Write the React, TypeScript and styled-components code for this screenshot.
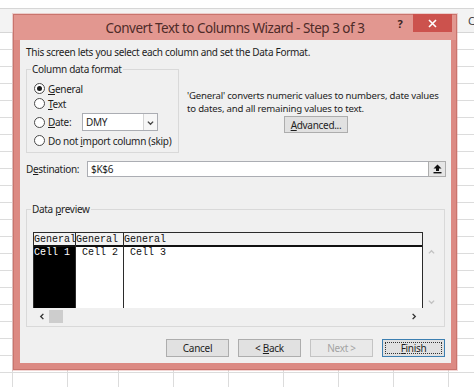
import React from 'react';
import styled, { createGlobalStyle, css } from 'styled-components';

const Global = createGlobalStyle`
  html, body { margin: 0; padding: 0; background: #ffffff; overflow: hidden; }
  body { font-family: "Noto Sans", "DejaVu Sans", sans-serif; color: #1e1e1e; }
  * { box-sizing: border-box; }
`;

const UI_FONT = `"Noto Sans", "DejaVu Sans", sans-serif`;
const MONO = `"Liberation Mono", "DejaVu Sans Mono", monospace`;

/* ---------- spreadsheet backdrop ---------- */
const Page = styled.div`
  position: relative;
  width: 474px;
  height: 387px;
  overflow: hidden;
  background: #ffffff;
  display: flex;
  flex-direction: column;
`;

const TopStrip = styled.div`
  height: 9px;
  background: #ffffff;
  border-bottom: 1px solid #d6d6d6;
`;

const HeaderBand = styled.div`
  height: 24px;
  background: #f3f3f3;
  border-bottom: 1px solid #d6d6d6;
  display: flex;
  align-items: center;
  justify-content: flex-end;
  font-family: ${UI_FONT};
  font-size: 11px;
  color: #444;
`;

const HeaderLetter = styled.span`
  width: 6px;
  overflow: hidden;
  white-space: nowrap;
`;

const SheetGrid = styled.div`
  flex: 1;
  display: flex;
  background-image: repeating-linear-gradient(
    to bottom,
    transparent 0px,
    transparent 16px,
    #dcdcdc 16px,
    #dcdcdc 17px
  );
`;

const SheetCol = styled.div<{ $w: number }>`
  width: ${(p) => p.$w}px;
  flex: none;
  border-right: 1px solid #dcdcdc;
`;

/* ---------- dialog window ---------- */
const Dialog = styled.div`
  position: absolute;
  left: 13px;
  top: 14px;
  width: 444px;
  height: 356px;
  background: #dc8a83;
  border: 1px solid #c9746d;
  display: flex;
  flex-direction: column;
  box-shadow: 0 0 0 1px rgba(220, 138, 131, 0.35);
`;

const TitleBar = styled.div`
  position: relative;
  height: 25px;
  flex: none;
  display: flex;
  align-items: center;
  justify-content: center;
  background: #e29790;
`;

const TitleText = styled.div`
  font-family: ${UI_FONT};
  font-size: 13.5px;
  letter-spacing: -0.5px;
  color: #4e2b28;
  padding-top: 1px;
  white-space: nowrap;
`;

const TitleControls = styled.div`
  position: absolute;
  right: 4px;
  top: -1px;
  display: flex;
  align-items: flex-start;
`;

const HelpGlyph = styled.div`
  width: 26px;
  height: 18px;
  display: flex;
  align-items: center;
  justify-content: center;
  font-family: ${UI_FONT};
  font-weight: 700;
  font-size: 11px;
  color: #3a2422;
`;

const CloseButton = styled.div`
  width: 39px;
  height: 18px;
  background: #cc524d;
  display: flex;
  align-items: center;
  justify-content: center;
`;

const Body = styled.div`
  flex: 1;
  margin: 0 5px 6px 6px;
  background: #f0f0f0;
  display: flex;
  flex-direction: column;
  font-family: ${UI_FONT};
  font-size: 10px;
  letter-spacing: -0.3px;
  color: #1e1e1e;
`;

const Intro = styled.div`
  padding: 5px 6px 0 6px;
  line-height: 14px;
  white-space: nowrap;
`;

const Content = styled.div`
  display: flex;
  flex-direction: column;
  padding: 0 6px;
`;

const TopRow = styled.div`
  display: flex;
  margin-top: 10px;
`;

const GroupBox = styled.div<{ $w?: number; $h: number }>`
  ${(p) =>
    p.$w
      ? css`
          width: ${p.$w}px;
        `
      : css`
          width: 100%;
        `}
  height: ${(p) => p.$h}px;
  border: 1px solid #d9d9d9;
  display: flex;
  flex-direction: column;
  flex: none;
`;

const Legend = styled.div`
  margin: -8px 0 0 4px;
  padding: 0 1px;
  align-self: flex-start;
  background: #f0f0f0;
  line-height: 14px;
  white-space: nowrap;
`;

const RadioList = styled.div`
  display: flex;
  flex-direction: column;
  padding: 5px 0 0 7px;
`;

const RadioRow = styled.div<{ $h?: number }>`
  height: ${(p) => p.$h ?? 15}px;
  display: flex;
  align-items: center;
  white-space: nowrap;
`;

const RadioCircle = styled.span<{ $on?: boolean }>`
  width: 11px;
  height: 11px;
  border-radius: 50%;
  border: 1px solid #4a4a4a;
  background: #ffffff;
  display: inline-flex;
  align-items: center;
  justify-content: center;
  margin-right: 3px;
  flex: none;
  &::after {
    content: '';
    width: 5px;
    height: 5px;
    border-radius: 50%;
    background: ${(p) => (p.$on ? '#1a1a1a' : 'transparent')};
  }
`;

const DateLabel = styled.span`
  width: 34px;
  flex: none;
`;

const Dropdown = styled.div`
  width: 76px;
  height: 18px;
  border: 1px solid #abadb3;
  background: #ffffff;
  display: flex;
  align-items: stretch;
`;

const DropdownValue = styled.span`
  flex: 1;
  padding-left: 3px;
  display: flex;
  align-items: center;
`;

const DropdownArrow = styled.span`
  width: 14px;
  border-left: 1px solid #d4d4d4;
  display: flex;
  align-items: center;
  justify-content: center;
  background: #f7f7f7;
`;

const Description = styled.div`
  margin: 20px 0 0 8px;
  display: flex;
  flex-direction: column;
  align-items: center;
  flex: 1;
`;

const DescLine = styled.div`
  align-self: stretch;
  font-size: 9.6px;
  letter-spacing: -0.2px;
  line-height: 13px;
  white-space: nowrap;
`;

const Button = styled.div<{ $w?: number; $disabled?: boolean; $default?: boolean }>`
  width: ${(p) => p.$w ?? 63}px;
  height: 18px;
  flex: none;
  display: flex;
  align-items: center;
  justify-content: center;
  background: ${(p) => (p.$disabled ? '#e9e9e9' : '#e1e1e1')};
  border: 1px solid ${(p) => (p.$default ? '#3c7fb1' : p.$disabled ? '#c4c4c4' : '#adadad')};
  color: ${(p) => (p.$disabled ? '#a3a3a3' : '#1e1e1e')};
  position: relative;
  ${(p) =>
    p.$default &&
    css`
      &::after {
        content: '';
        position: absolute;
        inset: 2px;
        border: 1px dotted #333;
      }
    `}
`;

const AdvancedButton = styled(Button)`
  margin-top: 1px;
  height: 17px;
`;

const DestRow = styled.div`
  margin-top: 8px;
  height: 16px;
  display: flex;
  align-items: center;
`;

const DestLabel = styled.span`
  width: 61px;
  flex: none;
`;

const DestInput = styled.div`
  flex: 1;
  margin-right: -1px;
  height: 16px;
  border: 1px solid #abadb3;
  background: #ffffff;
  display: flex;
  align-items: stretch;
`;

const DestValue = styled.span`
  flex: 1;
  padding-left: 3px;
  display: flex;
  align-items: center;
`;

const CollapseButton = styled.span`
  width: 18px;
  border: 1px solid #adadad;
  margin: -1px -1px -1px 0;
  background: #e6e6e6;
  display: flex;
  align-items: center;
  justify-content: center;
`;

const PreviewGroup = styled(GroupBox)`
  margin-top: 32px;
`;

const PreviewArea = styled.div`
  margin: 16px 0 0 6px;
  display: grid;
  grid-template-columns: 390px 17px;
  grid-template-rows: 76px 17px;
`;

const Table = styled.div`
  display: flex;
  border-left: 1px solid #2b2b2b;
  border-top: 1px solid #2b2b2b;
  border-right: 1px solid #2b2b2b;
  background: #ffffff;
  font-family: ${MONO};
  font-size: 10px;
  letter-spacing: 0;
`;

const Column = styled.div<{ $w?: number; $first?: boolean }>`
  ${(p) =>
    p.$w
      ? css`
          width: ${p.$w}px;
          flex: none;
        `
      : css`
          flex: 1;
        `}
  border-left: ${(p) => (p.$first ? 'none' : '1px solid #2b2b2b')};
  display: flex;
  flex-direction: column;
`;

const HeadCell = styled.div`
  height: 14px;
  background: #f2f2f2;
  border-bottom: 2px solid #111;
  line-height: 13px;
  white-space: pre;
  overflow: hidden;
  color: #111;
`;

const DataCell = styled.div<{ $selected?: boolean }>`
  flex: 1;
  background: ${(p) => (p.$selected ? '#000000' : '#ffffff')};
  color: ${(p) => (p.$selected ? '#ffffff' : '#111111')};
  line-height: 12px;
  white-space: pre;
  overflow: hidden;
`;

const VScroll = styled.div`
  padding-top: 13px;
  display: flex;
  flex-direction: column;
  justify-content: space-between;
  align-items: center;
  background: #f0f0f0;
`;

const ScrollArrow = styled.span`
  height: 14px;
  display: flex;
  align-items: center;
  justify-content: center;
  width: 14px;
`;

const HScroll = styled.div`
  display: flex;
  align-items: center;
  background: #f0f0f0;
  padding: 0 3px 0 2px;
`;

const Thumb = styled.span`
  width: 14px;
  height: 13px;
  background: #cdcdcd;
`;

const Spacer = styled.span`
  flex: 1;
`;

const ButtonRow = styled.div`
  margin-top: 12px;
  display: flex;
  justify-content: flex-end;
  gap: 9px;
`;

/* ---------- icons ---------- */
const Chevron = ({ dir, color, size = 7 }: { dir: 'up' | 'down' | 'left' | 'right'; color: string; size?: number }) => {
  const paths: Record<string, string> = {
    up: 'M1 5 L4 2 L7 5',
    down: 'M1 3 L4 6 L7 3',
    left: 'M5 1 L2 4 L5 7',
    right: 'M3 1 L6 4 L3 7',
  };
  return (
    <svg width={size} height={size} viewBox="0 0 8 8">
      <path d={paths[dir]} fill="none" stroke={color} strokeWidth="1.6" />
    </svg>
  );
};

const CloseIcon = () => (
  <svg width="9" height="9" viewBox="0 0 9 9">
    <path d="M1 1 L8 8 M8 1 L1 8" stroke="#ffffff" strokeWidth="1.6" />
  </svg>
);

const CollapseIcon = () => (
  <svg width="9" height="10" viewBox="0 0 9 10">
    <path d="M4.5 0.5 L8.5 4.5 L6 4.5 L6 7 L3 7 L3 4.5 L0.5 4.5 Z" fill="#111" />
    <rect x="0.5" y="8" width="8" height="1.4" fill="#111" />
  </svg>
);

export default function App() {
  const sheetCols = [13, 55, 51, 55, 55, 55, 55, 55, 55, 55];
  return (
    <>
      <Global />
      <Page>
        <TopStrip />
        <HeaderBand>
          <HeaderLetter>C</HeaderLetter>
        </HeaderBand>
        <SheetGrid>
          {sheetCols.map((w, i) => (
            <SheetCol key={i} $w={w} />
          ))}
        </SheetGrid>

        <Dialog>
          <TitleBar>
            <TitleText>Convert Text to Columns Wizard - Step 3 of 3</TitleText>
            <TitleControls>
              <HelpGlyph>?</HelpGlyph>
              <CloseButton>
                <CloseIcon />
              </CloseButton>
            </TitleControls>
          </TitleBar>
          <Body>
            <Intro>This screen lets you select each column and set the Data Format.</Intro>
            <Content>
              <TopRow>
                <GroupBox $w={153} $h={84}>
                  <Legend>Column data format</Legend>
                  <RadioList>
                    <RadioRow>
                      <RadioCircle $on />
                      <span>
                        <u>G</u>eneral
                      </span>
                    </RadioRow>
                    <RadioRow>
                      <RadioCircle />
                      <span>
                        <u>T</u>ext
                      </span>
                    </RadioRow>
                    <RadioRow $h={22}>
                      <RadioCircle />
                      <DateLabel>
                        <u>D</u>ate:
                      </DateLabel>
                      <Dropdown>
                        <DropdownValue>DMY</DropdownValue>
                        <DropdownArrow>
                          <Chevron dir="down" color="#444" />
                        </DropdownArrow>
                      </Dropdown>
                    </RadioRow>
                    <RadioRow>
                      <RadioCircle />
                      <span>
                        Do not <u>i</u>mport column (skip)
                      </span>
                    </RadioRow>
                  </RadioList>
                </GroupBox>
                <Description>
                  <DescLine>'General' converts numeric values to numbers, date values</DescLine>
                  <DescLine>to dates, and all remaining values to text.</DescLine>
                  <AdvancedButton $w={64}>
                    <span>
                      <u>A</u>dvanced...
                    </span>
                  </AdvancedButton>
                </Description>
              </TopRow>

              <DestRow>
                <DestLabel>
                  D<u>e</u>stination:
                </DestLabel>
                <DestInput>
                  <DestValue>$K$6</DestValue>
                  <CollapseButton>
                    <CollapseIcon />
                  </CollapseButton>
                </DestInput>
              </DestRow>

              <PreviewGroup $h={118}>
                <Legend>
                  Data <u>p</u>review
                </Legend>
                <PreviewArea>
                  <Table>
                    <Column $w={41} $first>
                      <HeadCell>General</HeadCell>
                      <DataCell $selected>Cell 1</DataCell>
                    </Column>
                    <Column $w={48}>
                      <HeadCell>General</HeadCell>
                      <DataCell> Cell 2</DataCell>
                    </Column>
                    <Column>
                      <HeadCell>General</HeadCell>
                      <DataCell> Cell 3</DataCell>
                    </Column>
                  </Table>
                  <VScroll>
                    <ScrollArrow>
                      <Chevron dir="up" color="#c2c2c2" />
                    </ScrollArrow>
                    <ScrollArrow>
                      <Chevron dir="down" color="#c2c2c2" />
                    </ScrollArrow>
                  </VScroll>
                  <HScroll>
                    <ScrollArrow>
                      <Chevron dir="left" color="#333" />
                    </ScrollArrow>
                    <Thumb />
                    <Spacer />
                    <ScrollArrow>
                      <Chevron dir="right" color="#333" />
                    </ScrollArrow>
                  </HScroll>
                  <div />
                </PreviewArea>
              </PreviewGroup>

              <ButtonRow>
                <Button>Cancel</Button>
                <Button>
                  <span>
                    &lt; <u>B</u>ack
                  </span>
                </Button>
                <Button $disabled>Next &gt;</Button>
                <Button $default>
                  <span>
                    <u>F</u>inish
                  </span>
                </Button>
              </ButtonRow>
            </Content>
          </Body>
        </Dialog>
      </Page>
    </>
  );
}
